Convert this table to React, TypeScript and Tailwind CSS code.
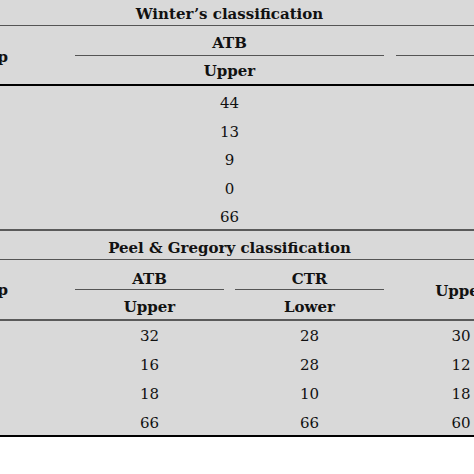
import React from "react";

const winterData = ["44", "13", "9", "0", "66"];
const peelData = [
  ["32", "28", "30"],
  ["16", "28", "12"],
  ["18", "10", "18"],
  ["66", "66", "60"],
];

function GroupCell({ pt }: { pt: string }) {
  return (
    <div className={"w-[75px] shrink-0 flex items-center justify-end pr-[67px] overflow-visible " + pt}>
      <span className="font-bold whitespace-nowrap">Group</span>
    </div>
  );
}

export default function App() {
  return (
    <div className="w-[474px] h-[474px] bg-white overflow-hidden font-['DejaVu_Serif',serif] text-[15px] text-[#111]">
      <div className="w-[474px] overflow-hidden bg-[#d9d9d9]">
        <div className="w-[530px]">
          {/* Winter title */}
          <div className="h-[25px] pt-[3px] flex items-center">
            <div className="w-[75px] shrink-0" />
            <div className="w-[309px] shrink-0 text-center font-bold whitespace-nowrap">Winter’s classification</div>
          </div>
          <div className="h-px bg-[#555]" />
          {/* Winter header */}
          <div className="h-[58px] flex">
            <GroupCell pt="pt-[4px]" />
            <div className="w-[309px] shrink-0 flex flex-col">
              <div className="h-[29px] pt-[6px] flex items-center justify-center font-bold">ATB</div>
              <div className="h-px bg-[#555]" />
              <div className="h-[28px] pt-[2px] flex items-center justify-center font-bold">Upper</div>
            </div>
            <div className="w-[12px] shrink-0" />
            <div className="flex-1 flex flex-col">
              <div className="h-[29px]" />
              <div className="h-px bg-[#555]" />
              <div className="h-[28px]" />
            </div>
          </div>
          <div className="h-[2px] bg-black" />
          {/* Winter data */}
          <div className="h-[143px] pt-[3px] overflow-hidden">
            {winterData.map((v, i) => (
              <div key={i} className="h-[28.5px] flex items-center">
                <div className="w-[75px] shrink-0" />
                <div className="w-[309px] shrink-0 text-center">{v}</div>
              </div>
            ))}
          </div>
          <div className="h-[2px] bg-[#5a5a5a]" />
          {/* Peel title */}
          <div className="h-[28px] pt-[7px] flex items-center">
            <div className="w-[75px] shrink-0" />
            <div className="w-[309px] shrink-0 text-center font-bold whitespace-nowrap">Peel &amp; Gregory classification</div>
          </div>
          <div className="h-px bg-[#555]" />
          {/* Peel header */}
          <div className="h-[59px] flex">
            <GroupCell pt="pt-[2px]" />
            <div className="w-[149px] shrink-0 flex flex-col">
              <div className="h-[29px] pt-[10px] flex items-center justify-center font-bold">ATB</div>
              <div className="h-px bg-[#555]" />
              <div className="h-[29px] pt-[6px] flex items-center justify-center font-bold">Upper</div>
            </div>
            <div className="w-[11px] shrink-0" />
            <div className="w-[149px] shrink-0 flex flex-col">
              <div className="h-[29px] pt-[10px] flex items-center justify-center font-bold">CTR</div>
              <div className="h-px bg-[#555]" />
              <div className="h-[29px] pt-[6px] flex items-center justify-center font-bold">Lower</div>
            </div>
            <div className="w-[12px] shrink-0" />
            <div className="w-[130px] shrink-0 pt-[4px] flex items-center justify-center font-bold">Upper</div>
          </div>
          <div className="h-[2px] bg-[#5a5a5a]" />
          {/* Peel data */}
          <div className="h-[114px] pt-[1px] overflow-hidden">
            {peelData.map((r, i) => (
              <div key={i} className="h-[29px] flex items-center">
                <div className="w-[75px] shrink-0" />
                <div className="w-[149px] shrink-0 text-center">{r[0]}</div>
                <div className="w-[11px] shrink-0" />
                <div className="w-[149px] shrink-0 text-center">{r[1]}</div>
                <div className="w-[12px] shrink-0" />
                <div className="w-[130px] shrink-0 text-center">{r[2]}</div>
              </div>
            ))}
          </div>
        </div>
      </div>
      <div className="h-[2px] bg-black" />
    </div>
  );
}
